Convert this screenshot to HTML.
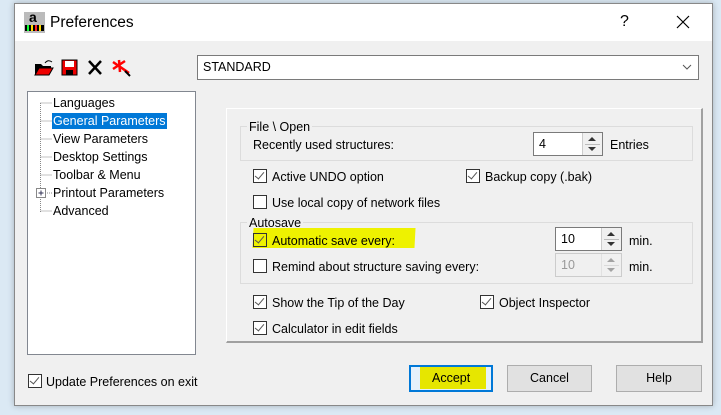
<!DOCTYPE html>
<html><head><meta charset="utf-8"><style>
*{margin:0;padding:0;box-sizing:border-box}
body{width:721px;height:415px;background:#dbe9f4;font-family:"Liberation Sans",sans-serif;font-size:12.5px;color:#000;position:relative;overflow:hidden}
.a{position:absolute}
.win{left:14px;top:3px;width:699px;height:403px;background:#f0f0f0;border:1px solid #888;box-shadow:0 0 6px rgba(0,0,0,.25)}
.tb{left:0;top:0;width:697px;height:37px;background:#fff}
.cb{width:14px;height:14px;border:1px solid #333;background:#fff}
.cb.c::after{content:"";position:absolute;left:3px;top:0px;width:4px;height:8px;border:solid #555;border-width:0 1.5px 1.5px 0;transform:rotate(40deg)}
.t{white-space:nowrap;line-height:14px}
.grp{border:1px solid #dcdcdc}
.spin{background:#fff;border:1px solid #7a7a7a}
.sb{position:absolute;right:0;top:0;width:20px;height:100%;background:#f0f0f0;border-left:1px solid #ccc}
.sb::before{content:"";position:absolute;left:5px;top:4px;border:4px solid transparent;border-bottom:4px solid #333;border-top:0}
.sb::after{content:"";position:absolute;left:5px;bottom:4px;border:4px solid transparent;border-top:4px solid #333;border-bottom:0}
.sb i{position:absolute;left:2px;right:2px;top:50%;border-top:1px solid #bbb}
.btn{background:#e1e1e1;border:1px solid #adadad;text-align:center;line-height:24px;height:27px}
.tree div{position:absolute;left:24px;white-space:nowrap;line-height:16px;padding:0 1px}
</style></head><body>
<div class="a win">
 <div class="a tb"></div>
</div>
<!-- title -->
<div class="a" style="left:24px;top:12px;width:21px;height:21px;background:#bbb"></div>
<div class="a" style="left:29px;top:10px;font-weight:bold;font-size:14px;line-height:14px">a</div>
<div class="a" style="left:25px;top:25px;width:19px;height:6px;background:linear-gradient(90deg,#000 0 2px,#1f3 2px 4px,#000 4px 6px,#fd0 6px 8px,#000 8px 10px,#f22 10px 12px,#000 12px 14px,#fd0 14px 16px,#000 16px 19px)"></div>
<div class="a t" style="left:50px;top:14px;font-size:15.5px;line-height:18px">Preferences</div>
<div class="a t" style="left:620px;top:13px;font-size:16px;line-height:18px">?</div>
<svg class="a" style="left:676px;top:15px" width="14" height="14"><path d="M1 1L13 13M13 1L1 13" stroke="#000" stroke-width="1.2"/></svg>
<!-- toolbar -->
<svg class="a" style="left:33px;top:58px" width="105" height="20">
<path d="M2 6h6l2 2h8v3H6L2 17z" fill="#000"/><path d="M2 17l4-7h14l-4 7z" fill="#e00" stroke="#000"/><path d="M12 5q3-4 7-1" stroke="#000" fill="none"/>
<rect x="29" y="2" width="15" height="15" fill="#e00" stroke="#000"/><rect x="32" y="3" width="9" height="6" fill="#fff"/><rect x="33" y="12" width="7" height="5" fill="#000"/>
<path d="M56 3l12 13M68 3L56 16" stroke="#000" stroke-width="2.5"/>
<path d="M80 4l16 11M80 11l12-8M86 2l1 12" stroke="#f00" stroke-width="2.5"/><path d="M92 13l5 5" stroke="#000" stroke-width="2"/>
</svg>
<!-- combo -->
<div class="a" style="left:197px;top:55px;width:502px;height:25px;background:#fff;border:1px solid #7a7a7a"></div>
<div class="a t" style="left:203px;top:60px">STANDARD</div>
<svg class="a" style="left:682px;top:63px" width="10" height="8"><path d="M1 2l4 4 4-4" stroke="#555" fill="none"/></svg>
<!-- tree -->
<div class="a tree" style="left:27px;top:91px;width:169px;height:264px;background:#fff;border:1px solid #828790">
 <svg class="a" style="left:0;top:0" width="26" height="130"><path d="M12.5 11V120M12.5 11H24M12.5 29H24M12.5 47H24M12.5 65H24M12.5 83H24M17 101H24M12.5 119H24" stroke="#888" stroke-dasharray="1 1" fill="none"/><rect x="8.5" y="96.5" width="9" height="9" fill="#fff" stroke="#888"/><path d="M10.5 101h5M13 98.5v5" stroke="#335"/></svg>
 <div style="top:3px">Languages</div>
 <div style="top:21px;background:#0078d7;color:#fff">General Parameters</div>
 <div style="top:39px">View Parameters</div>
 <div style="top:57px">Desktop Settings</div>
 <div style="top:75px">Toolbar &amp; Menu</div>
 <div style="top:93px">Printout Parameters</div>
 <div style="top:111px">Advanced</div>
</div>
<!-- panel -->
<div class="a" style="left:226px;top:108px;width:477px;height:235px;border:1px solid #fff;border-right:2px solid #a0a0a0;border-bottom:2px solid #a0a0a0"></div>
<div class="a grp" style="left:240px;top:126px;width:453px;height:35px"></div>
<div class="a t" style="left:247px;top:120px;background:#f0f0f0;padding:0 2px">File \ Open</div>
<div class="a t" style="left:253px;top:138px">Recently used structures:</div>
<div class="a spin" style="left:533px;top:132px;width:70px;height:24px"><div class="sb"><i></i></div></div>
<div class="a t" style="left:539px;top:137px">4</div>
<div class="a t" style="left:610px;top:138px">Entries</div>

<div class="a cb c" style="left:253px;top:169px"></div><div class="a t" style="left:272px;top:170px">Active UNDO option</div>
<div class="a cb c" style="left:466px;top:169px"></div><div class="a t" style="left:485px;top:170px">Backup copy (.bak)</div>
<div class="a cb" style="left:253px;top:195px"></div><div class="a t" style="left:272px;top:196px">Use local copy of network files</div>

<div class="a grp" style="left:240px;top:222px;width:453px;height:62px"></div>
<div class="a t" style="left:247px;top:216px;background:#f0f0f0;padding:0 2px">Autosave</div>
<div class="a" style="left:253px;top:228px;width:162px;height:20px;background:#eef200;transform:skewX(-3deg)"></div>
<div class="a cb c" style="left:253px;top:233px;background:transparent"></div><div class="a t" style="left:272px;top:234px">Automatic save every:</div>
<div class="a spin" style="left:555px;top:227px;width:67px;height:24px"><div class="sb"><i></i></div></div>
<div class="a t" style="left:561px;top:232px">10</div>
<div class="a t" style="left:629px;top:234px">min.</div>
<div class="a cb" style="left:253px;top:259px"></div><div class="a t" style="left:272px;top:260px">Remind about structure saving every:</div>
<div class="a spin" style="left:555px;top:253px;width:67px;height:24px;background:#f0f0f0;border-color:#ccc"><div class="sb" style="opacity:.4"><i></i></div></div>
<div class="a t" style="left:561px;top:258px;color:#999">10</div>
<div class="a t" style="left:629px;top:260px">min.</div>

<div class="a cb c" style="left:253px;top:295px"></div><div class="a t" style="left:272px;top:296px">Show the Tip of the Day</div>
<div class="a cb c" style="left:480px;top:295px"></div><div class="a t" style="left:499px;top:296px">Object Inspector</div>
<div class="a cb c" style="left:253px;top:321px"></div><div class="a t" style="left:272px;top:322px">Calculator in edit fields</div>
<!-- bottom -->
<div class="a cb c" style="left:28px;top:374px"></div><div class="a t" style="left:46px;top:375px">Update Preferences on exit</div>
<div class="a btn" style="left:409px;top:365px;width:84px;border:2px solid #0078d7;background:#e5f1fb"></div>
<div class="a" style="left:420px;top:367px;width:66px;height:22px;background:#e6e600"></div>
<div class="a t" style="left:432px;top:371px">Accept</div>
<div class="a btn" style="left:507px;top:365px;width:85px">Cancel</div>
<div class="a btn" style="left:616px;top:365px;width:86px">Help</div>
</body></html>
